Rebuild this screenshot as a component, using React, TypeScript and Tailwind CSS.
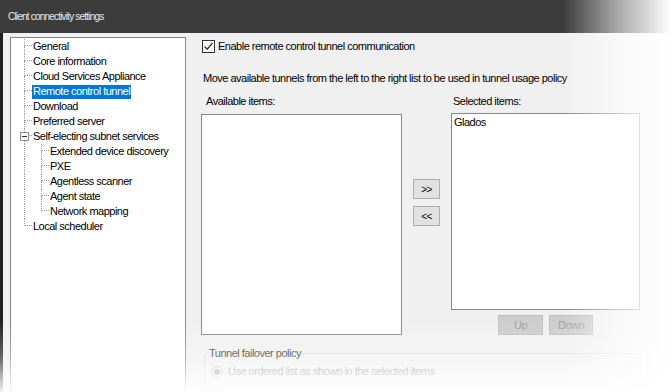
import React from 'react';

type Node = { label: string; level: 0 | 1; last?: boolean; expander?: boolean; selected?: boolean };

const nodes: Node[] = [
  { label: 'General', level: 0 },
  { label: 'Core information', level: 0 },
  { label: 'Cloud Services Appliance', level: 0 },
  { label: 'Remote control tunnel', level: 0, selected: true },
  { label: 'Download', level: 0 },
  { label: 'Preferred server', level: 0 },
  { label: 'Self-electing subnet services', level: 0, expander: true },
  { label: 'Extended device discovery', level: 1 },
  { label: 'PXE', level: 1 },
  { label: 'Agentless scanner', level: 1 },
  { label: 'Agent state', level: 1 },
  { label: 'Network mapping', level: 1, last: true },
  { label: 'Local scheduler', level: 0, last: true },
];

function Connector({ last, expander }: { last?: boolean; expander?: boolean }) {
  return (
    <span className="relative flex w-[8px] shrink-0 flex-col self-stretch">
      <span className="h-[7px] border-b border-l border-dotted border-[#a0a0a0]" />
      <span className={last ? 'flex-1' : 'flex-1 border-l border-dotted border-[#a0a0a0]'} />
      {expander && (
        <span className="absolute left-[-4px] top-[3px] flex h-[9px] w-[9px] items-center justify-center border border-[#919191] bg-white">
          <span className="h-px w-[5px] bg-[#333]" />
        </span>
      )}
    </span>
  );
}

function TreeRow({ node }: { node: Node }) {
  return (
    <div className="flex h-[15px] items-center pl-[13px]">
      {node.level === 1 && (
        <span className="w-[17px] shrink-0 self-stretch border-l border-dotted border-[#a0a0a0]" />
      )}
      <Connector last={node.last} expander={node.expander} />
      <span
        className={
          node.selected
            ? 'flex h-[14px] items-center bg-[#0078d7] px-[1px] text-white'
            : 'flex h-[14px] items-center px-[1px]'
        }
      >
        {node.label}
      </span>
    </div>
  );
}

function Radio({ checked, label }: { checked?: boolean; label?: string }) {
  return (
    <div className="flex h-[13px] items-center gap-[5px] text-[#999]">
      <span className="flex h-[12px] w-[12px] items-center justify-center rounded-full border border-[#bcbcbc] bg-[#f0f0f0]">
        {checked && <span className="h-[6px] w-[6px] rounded-full bg-[#a0a0a0]" />}
      </span>
      {label}
    </div>
  );
}

export default function App() {
  return (
    <div className="relative h-[392px] w-[671px] overflow-hidden bg-[#f0f0f0] font-['Liberation_Sans',Arial,sans-serif] text-[11px] tracking-[-0.5px] text-black">
      <div className="flex h-[33px] items-center bg-[#3c3c3c] pl-2 text-[10px] tracking-[-0.8px] text-[#e8e8e8]">
        Client connectivity settings
      </div>

      <div className="flex h-[400px] border-l-[3px] border-[#202020]">
        <div className="ml-[7px] mt-[4px] h-[400px] w-[176px] shrink-0 border border-[#828790] bg-white pt-[1px]">
          {nodes.map((n) => (
            <TreeRow key={n.label} node={n} />
          ))}
        </div>

        <div className="ml-[15px] flex flex-col pt-[7px]">
          <label className="ml-[1px] flex h-[13px] items-center gap-[3px]">
            <span className="flex h-[13px] w-[13px] items-center justify-center border border-[#333] bg-white">
              <svg width="11" height="11" viewBox="0 0 11 11">
                <path d="M1.5 5.5 L4.2 8.2 L9.5 2" fill="none" stroke="#333" strokeWidth="1.3" />
              </svg>
            </span>
            Enable remote control tunnel communication
          </label>

          <div className="ml-[2px] mt-[18px] leading-[14px]">
            Move available tunnels from the left to the right list to be used in tunnel usage policy
          </div>

          <div className="mt-[9px] flex items-start">
            <div className="flex flex-col">
              <div className="ml-[5px] leading-[14px]">Available items:</div>
              <div className="mt-[6px] h-[221px] w-[201px] border border-[#828790] bg-white" />
            </div>

            <div className="ml-[11px] flex flex-col gap-[7px] pt-[85px]">
              <button className="flex h-[20px] w-[27px] items-center justify-center border border-[#adadad] bg-[#e1e1e1] text-[10px]">
                &gt;&gt;
              </button>
              <button className="flex h-[20px] w-[27px] items-center justify-center border border-[#adadad] bg-[#e1e1e1] text-[10px]">
                &lt;&lt;
              </button>
            </div>

            <div className="ml-[11px] flex flex-col">
              <div className="ml-[2px] leading-[14px]">Selected items:</div>
              <div className="mt-[5px] h-[197px] w-[189px] border border-[#828790] bg-white pl-[2px] pt-[1px] leading-[14px]">
                Glados
              </div>
              <div className="mt-[5px] flex justify-center gap-[6px]">
                <button className="flex h-[20px] w-[45px] items-center justify-center border border-[#bfbfbf] bg-[#cccccc] text-[#a0a0a0]">
                  Up
                </button>
                <button className="flex h-[20px] w-[44px] items-center justify-center border border-[#bfbfbf] bg-[#cccccc] text-[#a0a0a0]">
                  Down
                </button>
              </div>
            </div>
          </div>

          <fieldset className="ml-[3px] mt-[11px] w-[437px] rounded-sm border border-[#dcdcdc] pb-[6px] pl-[6px]">
            <legend className="ml-[-3px] px-[1px] leading-[14px] text-[#333]">Tunnel failover policy</legend>
            <div className="mt-[5px] flex flex-col gap-[8px]">
              <Radio checked label="Use ordered list as shown in the selected items" />
              <Radio />
            </div>
          </fieldset>
        </div>
      </div>

      <div className="pointer-events-none absolute right-0 top-0 h-full w-[108px] bg-gradient-to-r from-white/0 via-white/55 to-white" />
      <div className="pointer-events-none absolute bottom-0 left-0 h-[72px] w-full bg-gradient-to-b from-white/0 via-white/30 to-white/95" />
    </div>
  );
}
